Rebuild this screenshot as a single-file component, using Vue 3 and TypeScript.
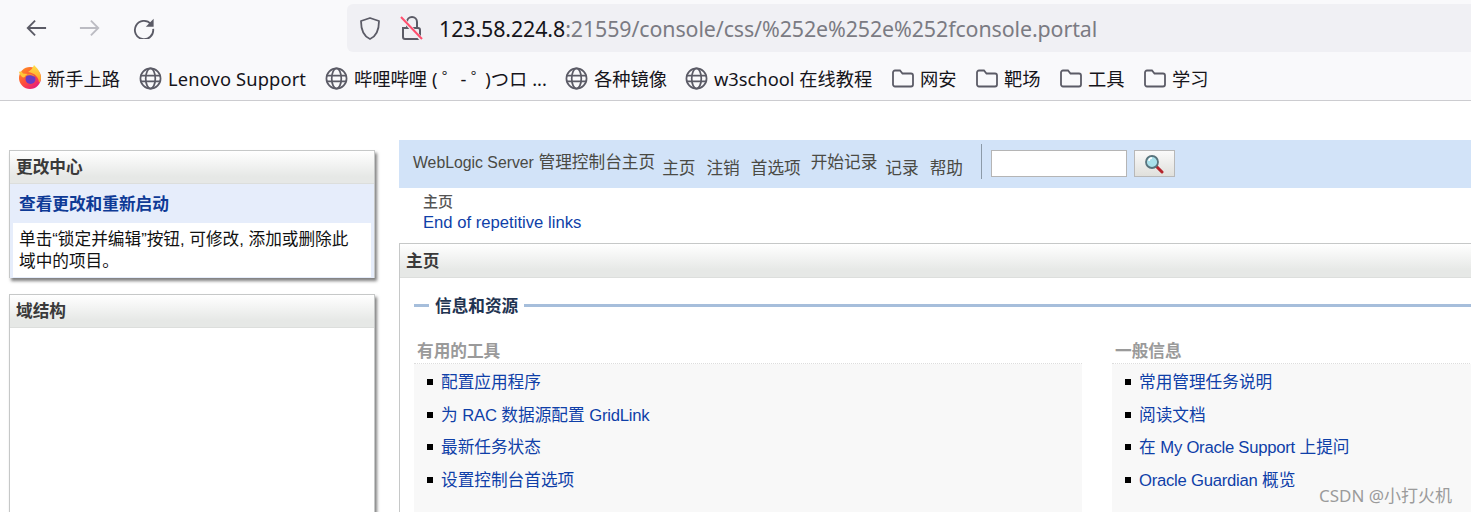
<script setup lang="ts">
const bookmarks = [
  { label: '各种镜像', w: 120 },
  { label: 'w3school 在线教程', w: 206 },
]
const folders = ['网安', '靶场', '工具', '学习']
// Odd-index segments are Latin runs, set slightly tighter than the CJK around them.
const tools: string[][] = [['配置应用程序'], ['为 ', 'RAC', ' 数据源配置 ', 'GridLink'], ['最新任务状态'], ['设置控制台首选项']]
const infos: string[][] = [['常用管理任务说明'], ['阅读文档'], ['在 ', 'My Oracle Support', ' 上提问'], ['', 'Oracle Guardian', ' 概览']]
</script>

<template>
  <div class="root">
    <header class="chrome">
      <div class="toolbar">
        <div class="navs">
          <svg class="nav-ic" viewBox="0 0 24 24"><path d="M23 12H3M11 4l-8 8 8 8" fill="none" stroke="#5b5b66" stroke-width="2"/></svg>
          <svg class="nav-ic" viewBox="0 0 24 24"><path d="M1 12h20M13 4l8 8-8 8" fill="none" stroke="#bcbcc3" stroke-width="2"/></svg>
          <svg class="nav-ic" viewBox="0 0 24 24"><path d="M19.5 7.500A10 10 0 1 0 22 13" fill="none" stroke="#5b5b66" stroke-width="2"/><path d="M22.500 2v8.500H14z" fill="#5b5b66"/></svg>
        </div>
        <div class="urlbar">
          <svg class="shield" viewBox="0 0 24 24"><path d="M12 2l9 3c0 9-2 15-9 18C5 20 3 14 3 5z" fill="none" stroke="#5b5b66" stroke-width="1.8" stroke-linejoin="round"/></svg>
          <svg class="lock" viewBox="0 0 24 26">
            <path d="M7 12V7a5 5 0 0 1 10 0v5M3 13h15a2 2 0 0 1 2 2v7a2 2 0 0 1-2 2H5a2 2 0 0 1-2-2z" fill="none" stroke="#5b5b66" stroke-width="2"/>
            <path d="M1 2l21 23" stroke="#f0f0f4" stroke-width="4"/>
            <path d="M1 2l21 22" stroke="#ff4f6e" stroke-width="2"/>
          </svg>
          <span class="url"><span class="host">123.58.224.8</span><span class="rest">:21559/console/css/%252e%252e%252fconsole.portal</span></span>
        </div>
      </div>
      <div class="bookmarks">
        <span class="bm first">
          <svg class="fx" viewBox="0 0 24 24">
            <defs>
              <linearGradient id="fxg" x1="0" y1="0" x2="0.8" y2="1"><stop offset="0" stop-color="#ff9a1f"/><stop offset="0.55" stop-color="#ff4f3a"/><stop offset="1" stop-color="#e31587"/></linearGradient>
              <linearGradient id="fxy" x1="0" y1="0" x2="0" y2="1"><stop offset="0" stop-color="#ffe14a"/><stop offset="1" stop-color="#ff9520"/></linearGradient>
            </defs>
            <circle cx="12" cy="13" r="11" fill="url(#fxg)"/>
            <path d="M10 7C13 5 15 3 16 0c3 3 7 7 7 13 0 2-1 4-2 5 0-5-4-10-11-11z" fill="url(#fxy)"/>
            <path d="M1 7c2-1 3 0 4 1.500l5 .5-4 3.500c-2 0-4-2-5-5.500z" fill="#ffc63a"/>
            <circle cx="12.500" cy="14" r="5" fill="#6a3bc4"/>
            <path d="M7 11c3-3 8-3 10 1-3-2-6-2-10-1z" fill="#ff8a2a"/>
          </svg>
          <span>新手上路</span>
        </span>
        <span class="bm b2">
          <svg class="globe" viewBox="0 0 24 24"><g fill="none" stroke="#5b5b66" stroke-width="1.8"><circle cx="12" cy="12" r="10.5"/><ellipse cx="12" cy="12" rx="5" ry="10.5"/><path d="M1.5 9h21M1.5 15h21"/></g></svg>
          <span class="lenovo">Lenovo Support</span>
        </span>
        <span class="bm b3">
          <svg class="globe" viewBox="0 0 24 24"><g fill="none" stroke="#5b5b66" stroke-width="1.8"><circle cx="12" cy="12" r="10.5"/><ellipse cx="12" cy="12" rx="5" ry="10.5"/><path d="M1.5 9h21M1.5 15h21"/></g></svg>
          <span>哔哩哔哩 ( ゜- <span class="tight">゜</span>)つロ ...</span>
        </span>
        <span v-for="b in bookmarks" :key="b.label" class="bm" :style="{ width: b.w + 'px' }">
          <svg class="globe" viewBox="0 0 24 24"><g fill="none" stroke="#5b5b66" stroke-width="1.8"><circle cx="12" cy="12" r="10.5"/><ellipse cx="12" cy="12" rx="5" ry="10.5"/><path d="M1.5 9h21M1.5 15h21"/></g></svg>
          <span>{{ b.label }}</span>
        </span>
        <span v-for="f in folders" :key="f" class="bm folder">
          <svg class="fold" viewBox="0 0 24 20"><path d="M2 4a2 2 0 0 1 2-2h5l2.500 3H20a2 2 0 0 1 2 2v9a2 2 0 0 1-2 2H4a2 2 0 0 1-2-2z" fill="none" stroke="#5b5b66" stroke-width="1.8"/></svg>
          <span>{{ f }}</span>
        </span>
      </div>
    </header>

    <main class="page">
      <aside class="left">
        <section class="panel change">
          <h3 class="ptitle">更改中心</h3>
          <div class="pbody">
            <div class="view-link">查看更改和重新启动</div>
            <p class="hint">单击“锁定并编辑”按钮, 可修改, 添加或删除此域中的项目。</p>
          </div>
        </section>
        <section class="panel domain">
          <h3 class="ptitle">域结构</h3>
        </section>
      </aside>

      <div class="right">
        <div class="topbar">
          <span class="tb-title"><span class="wl">WebLogic Server</span> 管理控制台主页</span>
          <span class="tb-link n1">主页</span>
          <span class="tb-link n2">注销</span>
          <span class="tb-link n3">首选项</span>
          <span class="tb-title rec">开始记录</span>
          <span class="tb-link r2">记录</span>
          <span class="tb-link r3">帮助</span>
          <span class="sep"></span>
          <input class="search" type="text" />
          <button class="sbtn" type="button" aria-label="搜索">
            <svg viewBox="0 0 22 20" width="22" height="20">
              <path d="M12 11l7 7" stroke="#b5252c" stroke-width="3" stroke-linecap="round"/>
              <circle cx="9" cy="8" r="6" fill="#a9e0ea" stroke="#58737c" stroke-width="1.800"/>
              <path d="M6 7a3 3 0 0 1 3-3" stroke="#fff" stroke-width="1.500" fill="none"/>
            </svg>
          </button>
        </div>
        <div class="crumbs">
          <div class="crumb">主页</div>
          <div class="skip">End of repetitive links</div>
        </div>
        <section class="home">
          <h3 class="ptitle home-title">主页</h3>
          <div class="legend"><i class="dash"></i><strong>信息和资源</strong><i class="rule"></i></div>
          <div class="cols">
            <div class="col c1">
              <h4>有用的工具</h4>
              <ul><li v-for="(t, i) in tools" :key="i"><a><span v-for="(s, j) in t" :key="j" :class="{ lat: j % 2 === 1 }">{{ s }}</span></a></li></ul>
            </div>
            <div class="col c2">
              <h4>一般信息</h4>
              <ul><li v-for="(t, i) in infos" :key="i"><a><span v-for="(s, j) in t" :key="j" :class="{ lat: j % 2 === 1 }">{{ s }}</span></a></li></ul>
            </div>
          </div>
        </section>
      </div>
    </main>
    <div class="mark">CSDN @小打火机</div>
  </div>
</template>

<style>
html, body { margin: 0; padding: 0; background: #fff; overflow: hidden; }
</style>

<style scoped>
.root { position: relative; width: 1471px; height: 512px; overflow: hidden; font-family: "Liberation Sans", "Noto Sans CJK SC", sans-serif; background: #fff; }
.chrome { height: 100px; background: #f9f9fb; border-bottom: 1px solid #ccccd0; font-family: "Noto Sans", "Noto Sans CJK SC", sans-serif; }
.toolbar { height: 52px; display: flex; align-items: flex-end; }
.navs { width: 347px; height: 48px; display: flex; align-items: center; padding-left: 25px; box-sizing: border-box; gap: 32px; }
.nav-ic { width: 22px; height: 22px; flex: none; }
.urlbar { flex: 1; height: 48px; background: #f0f0f4; border-radius: 6px 0 0 6px; display: flex; align-items: center; }
.shield { width: 24px; height: 24px; margin-left: 11px; }
.lock { width: 24px; height: 26px; margin-left: 18px; }
.url { margin-left: 15px; font-size: 21.400px; letter-spacing: -0.1px; white-space: nowrap; }
.host { color: #15141a; }
.rest { color: #7b7b83; }
.bookmarks { height: 48px; display: flex; align-items: center; padding: 4px 0 0 18px; box-sizing: border-box; font-size: 18.300px; color: #15141a; white-space: nowrap; }
.bm { display: inline-flex; align-items: center; flex: none; box-sizing: border-box; }
.bm.first { width: 121px; gap: 5px; }
.b2 { width: 186px; }
.b3 { width: 240px; }
.lenovo { letter-spacing: 0.15px; }
.tight { letter-spacing: -4px; }
.globe { width: 23px; height: 23px; margin-right: 6px; flex: none; }
.fx { width: 24px; height: 24px; flex: none; margin-top: -2px; }
.fold { width: 24px; height: 21px; margin-right: 5px; flex: none; }
.folder { width: 84px; }
.page { display: flex; align-items: flex-start; padding-top: 39px; }
.left { width: 399px; flex: none; padding: 10px 0 0 9px; box-sizing: border-box; }
.panel { width: 366px; border: 1px solid #c6c8c8; box-sizing: border-box; background: #fff; box-shadow: 2px 3px 3px #7f7f7f; }
.change { height: 128px; }
.domain { height: 300px; margin-top: 16px; }
.ptitle { margin: 0; height: 32px; line-height: 34px; padding-left: 6px; font-size: 16.670px; font-weight: 700; color: #3a3a3a; background: linear-gradient(#fff, #e6e8e6 80%); border-bottom: 1px solid #dcdedc; box-sizing: content-box; }
.pbody { background: #e6edfb; padding: 0 3px 0; height: 94px; box-sizing: border-box; }
.view-link { height: 39px; line-height: 41px; margin: 0 -3px; padding-left: 9px; font-size: 16.670px; font-weight: 700; color: #0e3a96; }
.hint { margin: 0; padding: 6px 14px 0 6px; height: 54px; background: #fff; font-size: 16.670px; line-height: 22px; color: #111; box-sizing: border-box; }
.right { flex: 1; min-width: 0; }
.topbar { height: 48px; background: #d2e3f8; display: flex; padding-left: 14px; color: #4a4a44; white-space: nowrap; position: relative; }
.tb-title { font-size: 16.670px; line-height: 45px; }
.wl { font-size: 15.800px; }
.tb-link { font-size: 16.670px; line-height: 57px; }
.n1 { margin-left: 7px; }
.n2 { margin-left: 11px; }
.n3 { margin-left: 11px; }
.rec { margin-left: 10px; }
.r2 { margin-left: 8px; }
.r3 { margin-left: 11px; }
.sep { width: 1px; height: 35px; margin: 4px 9px 0 18px; background: #8c9aa8; }
.search { width: 136px; height: 27px; margin: 10px 7px 0 0; padding: 0; border: 1px solid #b5b5b5; background: #fff; box-sizing: border-box; }
.sbtn { width: 41px; height: 27px; margin-top: 10px; padding: 0; border: 1px solid #b8b8b8; background: linear-gradient(#fafafa, #e0e0dc); display: flex; align-items: center; justify-content: center; box-sizing: border-box; }
.crumbs { height: 55px; padding: 4px 0 0 24px; box-sizing: border-box; }
.crumb { font-size: 15px; line-height: 20px; font-weight: 500; color: #555; }
.skip { font-size: 16.670px; line-height: 22px; color: #0f3fa8; }
.home { border-top: 1px solid #c6c8c8; border-left: 1px solid #c6c8c8; height: 268px; }
.home-title { height: 33px; line-height: 35px; }
.legend { display: flex; align-items: center; height: 24px; margin-top: 15px; padding-left: 14px; color: #1f3451; font-size: 16.670px; }
.dash { width: 15px; height: 3px; background: #a6bedb; flex: none; }
.legend strong { margin: 0 6px; flex: none; }
.rule { flex: 1; height: 3px; background: #a6bedb; }
.cols { display: flex; padding-left: 14px; margin-top: 22px; }
.col { flex: none; }
.c1 { width: 668px; }
.c2 { width: 360px; margin-left: 30px; }
.col h4 { margin: 0; height: 24px; line-height: 25px; padding-left: 3px; font-size: 16.670px; font-weight: 700; color: #9a9a9a; border-bottom: 1px dotted #ddd; box-sizing: content-box; }
.col ul { margin: 0; padding: 0 0 0 27px; list-style: none; background: #f8f8f8; height: 160px; }
.col li { position: relative; height: 32.500px; line-height: 38px; font-size: 16.670px; color: #0f3fa8; white-space: nowrap; }
.col li::before { content: ""; position: absolute; left: -14px; top: 15px; width: 6px; height: 6px; background: #000; }
.lat { letter-spacing: -0.25px; }
.mark { position: absolute; left: 1319px; top: 482px; font-size: 17px; color: #9b9b9b; font-family: "Noto Sans", "Noto Sans CJK SC", sans-serif; }
</style>
